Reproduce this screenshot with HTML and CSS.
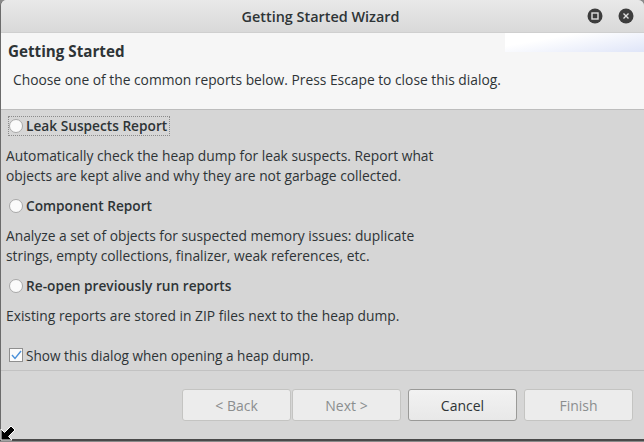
FILE: index.html
```html
<!DOCTYPE html>
<html>
<head>
<meta charset="utf-8">
<link rel="stylesheet" href="styles.css">
</head>
<body>
<div class="window">
  <div class="titlebar">
    <span class="title">Getting Started Wizard</span>
    <div class="wm">
      <span class="wm-btn"><svg width="16" height="16" viewBox="0 0 16 16"><circle cx="8" cy="8" r="7.5" fill="#3d3d3d"/><rect x="5" y="5" width="6" height="6" fill="none" stroke="#e0e0e0" stroke-width="1.4"/></svg></span>
      <span class="wm-btn"><svg width="16" height="16" viewBox="0 0 16 16"><circle cx="8" cy="8" r="7.5" fill="#3d3d3d"/><path d="M5.5 5.5 L10.5 10.5 M10.5 5.5 L5.5 10.5" stroke="#e0e0e0" stroke-width="1.4"/></svg></span>
    </div>
  </div>
  <div class="header">
    <div class="banner"></div>
    <div class="h-title">Getting Started</div>
    <div class="h-desc">Choose one of the common reports below. Press Escape to close this dialog.</div>
  </div>
  <div class="content">
    <div class="option focused"><span class="radio"></span><span class="opt-label">Leak Suspects Report</span></div>
    <div class="desc">Automatically check the heap dump for leak suspects. Report what<br>objects are kept alive and why they are not garbage collected.</div>
    <div class="option"><span class="radio"></span><span class="opt-label">Component Report</span></div>
    <div class="desc">Analyze a set of objects for suspected memory issues: duplicate<br>strings, empty collections, finalizer, weak references, etc.</div>
    <div class="option"><span class="radio"></span><span class="opt-label">Re-open previously run reports</span></div>
    <div class="desc">Existing reports are stored in ZIP files next to the heap dump.</div>
    <div class="check-row"><span class="checkbox"><svg width="11" height="10" viewBox="0 0 11 10"><path d="M1 5 L4 8.5 L10 1" fill="none" stroke="#4a90d9" stroke-width="1.4"/></svg></span><span class="check-label">Show this dialog when opening a heap dump.</span></div>
  </div>
  <div class="footer">
    <button class="btn disabled">&lt; Back</button>
    <button class="btn disabled next">Next &gt;</button>
    <button class="btn cancel">Cancel</button>
    <button class="btn disabled finish">Finish</button>
  </div>
</div>
<svg class="cursor" width="16" height="16" viewBox="0 0 16 16"><path d="M1 15 L1 4 L4.5 7.5 L11 1 L15 5 L8.5 11.5 L12 15 Z" fill="#000" stroke="#fff" stroke-width="1"/></svg>
</body>
</html>
```
FILE: styles.css
```css
* { box-sizing: border-box; }
html, body { margin: 0; padding: 0; }
body {
  width: 644px;
  height: 442px;
  background: #8a8a8a;
  font-family: "Open Sans", "DejaVu Sans", sans-serif;
  font-size: 13.8px;
  color: #2e3436;
  overflow: hidden;
  position: relative;
}
.window {
  width: 644px;
  height: 441px;
  background: #d6d6d6;
  border-radius: 6px 6px 0 0;
  border-left: 1px solid #6b6b6b;
  border-bottom: 2px solid #4a4a4a;
  display: flex;
  flex-direction: column;
  overflow: hidden;
}
.titlebar {
  height: 33px;
  flex: none;
  background: linear-gradient(#e9e9e9, #d9d9d9);
  border-bottom: 1px solid #cfcfcf;
  display: flex;
  align-items: center;
  justify-content: center;
  position: relative;
}
.title {
  font-size: 14.4px;
  font-weight: 600;
  color: #2e3436;
  margin-left: -4px;
}
.wm {
  position: absolute;
  right: 10px;
  top: 8px;
  display: flex;
  gap: 15px;
}
.wm-btn { display: block; width: 16px; height: 16px; }
.wm-btn svg { display: block; }
.header {
  height: 77px;
  flex: none;
  background: #f6f6f6;
  border-bottom: 1px solid #bdbdbd;
  position: relative;
  padding: 8px 0 0 7px;
}
.banner {
  position: absolute;
  right: 0;
  top: 0;
  width: 139px;
  height: 19px;
  background: linear-gradient(170deg, #ffffff 30%, #dfe5f8 100%);
}
.h-title {
  font-weight: 700;
  font-size: 15.2px;
  line-height: 20px;
}
.h-desc {
  margin-top: 9px;
  margin-left: 5px;
  line-height: 20px;
}
.content {
  flex: 1;
  padding: 6px 0 0 5px;
  border-bottom: 1px solid #c2c2c2;
}
.option {
  display: flex;
  align-items: center;
  height: 20px;
  width: max-content;
  padding-right: 2px;
  margin-left: 2px;
  margin-top: 0;
  border: 1px solid transparent;
}
.option.focused { border: 1px dotted #8a8a8a; }
.radio {
  width: 14px;
  height: 14px;
  border-radius: 50%;
  background: #fafafa;
  border: 1px solid #a8a8a8;
  margin-left: 0;
  margin-right: 3px;
}
.opt-label { font-weight: 600; font-size: 13.7px; line-height: 18px; }
.check-label { font-size: 13.6px; }
.desc {
  margin-top: 10px;
  margin-bottom: 10px;
  line-height: 20px;
}
.check-row {
  display: flex;
  align-items: center;
  margin-top: 19px;
  margin-left: 3px;
  height: 20px;
}
.checkbox {
  width: 14px;
  height: 14px;
  border: 1px solid #8f8f8f;
  background: #fbfbfb;
  margin-right: 3px;
  display: flex;
  align-items: center;
  justify-content: center;
}
.checkbox svg { display: block; }
.footer {
  height: 68px;
  flex: none;
  display: flex;
  align-items: flex-start;
  padding: 18px 0 0 181px;
}
.btn {
  width: 109px;
  height: 32px;
  border: 1px solid #b8b8b6;
  border-radius: 3px;
  background: linear-gradient(#f2f2f2, #e8e8e8);
  font-family: inherit;
  font-size: 14px;
  color: #2e3436;
  padding: 0;
}
.btn.disabled { color: #8b8e8f; background: #ececec; border-color: #c4c4c2; }
.btn.next { margin-left: 1px; }
.btn.cancel { margin-left: 7px; border-color: #9a9a98; }
.btn.finish { margin-left: 7px; }
.cursor { position: absolute; left: 0; top: 425px; }
```
